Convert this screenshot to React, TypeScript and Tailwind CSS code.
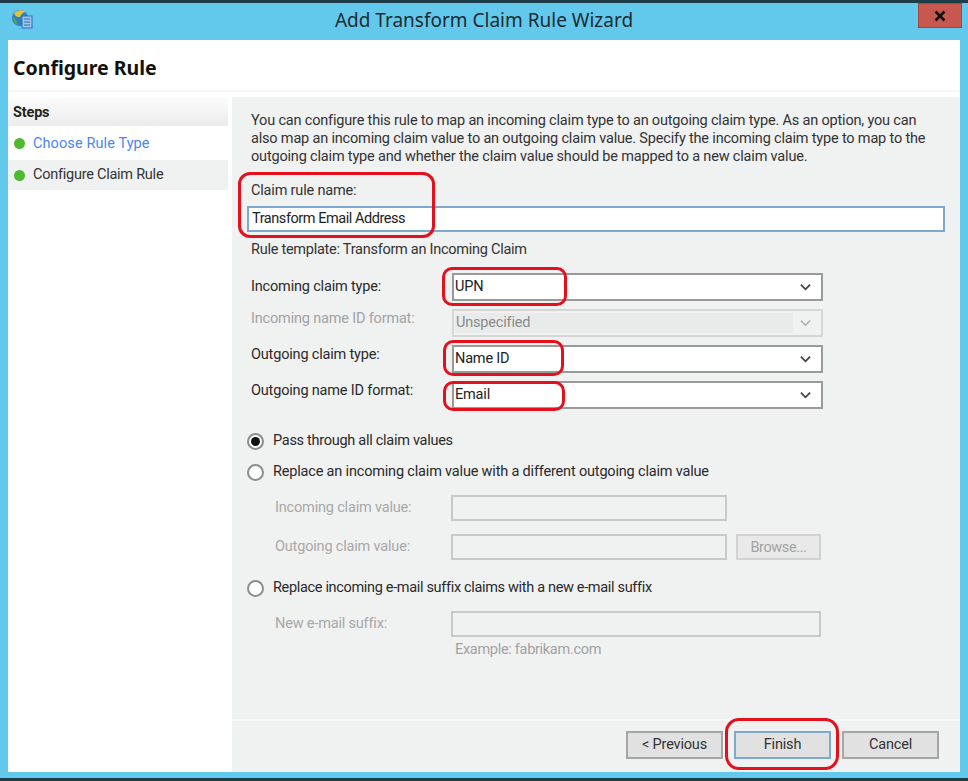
import type { ReactNode } from 'react'

const font = { fontFamily: 'Roboto, sans-serif' }
const titleFont = { fontFamily: '"Noto Sans", sans-serif' }

function Chevron({ disabled }: { disabled?: boolean }) {
  return (
    <svg viewBox="0 0 12 8" className="w-[11px] h-[8px]" aria-hidden="true">
      <path d="M1 1.5 6 6.5 11 1.5" fill="none" stroke={disabled ? '#b5b5b5' : '#444'} strokeWidth="2" />
    </svg>
  )
}

function Combo({ value, disabled }: { value: string; disabled?: boolean }) {
  return (
    <div className={`w-[371px] h-[28px] border-2 flex items-center pl-[1px] pr-[4px] ${disabled ? 'border-[#d6d6d6] bg-[#f0f1f1]' : 'border-[#9a9a9a] bg-white'}`}>
      <div className={`flex-1 h-[20px] flex items-center ${disabled ? 'bg-[#e9eaea] text-[#8a8a8a] pl-[1px]' : 'text-[#222]'}`}>{value}</div>
      <div className="w-[24px] flex justify-center"><Chevron disabled={disabled} /></div>
    </div>
  )
}

function FieldRow({ label, disabled, value, className, labelClass }: { label: string; disabled?: boolean; value: string; className?: string; labelClass?: string }) {
  return (
    <div className={`h-[28px] flex items-center ${className ?? ''}`}>
      <div className={`w-[201px] ${labelClass ?? ''} ${disabled ? 'text-[#a3a3a3]' : 'text-[#2a2a2a]'}`}>{label}</div>
      <Combo value={value} disabled={disabled} />
    </div>
  )
}

function Radio({ checked, children, className }: { checked?: boolean; children: ReactNode; className?: string }) {
  return (
    <div className={`flex items-center gap-[9px] ${className ?? ''}`}>
      <div className="w-[17px] h-[17px] rounded-full border-2 border-[#8d8d8d] bg-white flex items-center justify-center">
        {checked && <div className="w-[9px] h-[9px] rounded-full bg-[#111]" />}
      </div>
      <div className="text-[#2a2a2a]">{children}</div>
    </div>
  )
}

function DisabledInput({ label, className, children }: { label: string; className?: string; children?: ReactNode }) {
  return (
    <div className={`flex items-center pl-[28px] ${className ?? ''}`}>
      <div className="w-[176px] text-[#a8a8a8]">{label}</div>
      {children}
    </div>
  )
}

function WizButton({ label, focus }: { label: string; focus?: boolean }) {
  return (
    <div className={`w-[97px] h-[28px] flex items-center justify-center bg-[#e1e1e1] border-2 text-[#333] ${focus ? 'border-[#7ea9cf]' : 'border-[#a5a5a5]'}`}>
      {label}
    </div>
  )
}

function Marker({ className }: { className: string }) {
  return <div className={`absolute border-[3px] border-[#e5101c] ${className}`} />
}

export default function App() {
  return (
    <div style={font} className="relative w-[968px] h-[781px] overflow-hidden bg-[#62c9ec] text-[14.5px] leading-[20px] tracking-[-0.18px] border-t-[3px] border-b-[3px] border-[#1c3c48]">
      <div className="relative h-[37px] flex items-center justify-center pb-[3px]">
        <svg viewBox="0 0 24 24" className="absolute left-[10px] top-[5px] w-[24px] h-[24px]" aria-hidden="true">
          <circle cx="10" cy="10" r="8" fill="#2f7fc4" />
          <path d="M4 5c3-3 8-4 12-1-3 0-5 2-6 5-2 0-5 0-6-4z" fill="#e4c23a" />
          <path d="M3 9c2 1 4 4 5 8-3-1-5-4-5-8z" fill="#5aa83c" />
          <rect x="12" y="8" width="10" height="12" fill="#9fc6ea" stroke="#2d6fb5" />
          <path d="M14 11h6M14 14h6M14 17h6" stroke="#2d6fb5" strokeWidth="1.2" />
        </svg>
        <div style={titleFont} className="text-[19px] tracking-normal text-[#1f2a30]">Add Transform Claim Rule Wizard</div>
        <div className="absolute right-[6px] top-0 w-[44px] h-[25px] bg-[#c7584f] border border-[#a8453e] flex items-center justify-center">
          <svg viewBox="0 0 12 12" className="w-[12px] h-[12px]" aria-hidden="true">
            <path d="M1.5 1.5 10.5 10.5M10.5 1.5 1.5 10.5" stroke="#111" strokeWidth="2.6" />
          </svg>
        </div>
      </div>

      <div className="ml-[8px] mr-[8px] h-[732px] bg-white flex flex-col">
        <div style={titleFont} className="h-[52px] pl-[5px] pt-[18px] text-[19.5px] tracking-normal font-bold text-[#111] border-b-2 border-[#f6f6f6]">Configure Rule</div>
        <div className="flex-1 flex pt-[5px]">
          <div className="w-[220px] pt-[1px]">
            <div className="h-[28px] pl-[5px] pt-[2px] flex items-center font-bold text-[#222] bg-gradient-to-b from-[#fbfbfb] to-[#ececec]">Steps</div>
            <div className="h-[34px] flex items-center pl-[6px] pt-[1px] gap-[8px] text-[#4c86f5] tracking-[0.1px]">
              <div className="w-[11px] h-[11px] rounded-full bg-[#4cbb2e]" />
              Choose Rule Type
            </div>
            <div className="h-[30px] flex items-center pl-[6px] gap-[8px] bg-[#f0f1f1] text-[#333] tracking-[-0.25px]">
              <div className="w-[11px] h-[11px] rounded-full bg-[#4cbb2e]" />
              Configure Claim Rule
            </div>
          </div>

          <div className="ml-[4px] flex-1 bg-[#f0f1f1] flex flex-col">
            <div className="flex-1 pl-[15px] pr-[15px] pt-[15px]">
              <div className="pl-[4px] text-[#333] leading-[18px] whitespace-nowrap">
                You can configure this rule to map an incoming claim type to an outgoing claim type. As an option, you can<br />
                also map an incoming claim value to an outgoing claim value. Specify the incoming claim type to map to the<br />
                outgoing claim type and whether the claim value should be mapped to a new claim value.
              </div>
              <div className="mt-[15px] pl-[4px] text-[#333]">Claim rule name:</div>
              <div className="mt-[5px] h-[26px] border-2 border-[#7ea9cf] bg-white flex items-center pl-[3px] text-[#222] tracking-[-0.45px]">Transform Email Address</div>
              <div className="mt-[8px] pl-[4px] text-[#333] tracking-[-0.26px]">Rule template: Transform an Incoming Claim</div>
              <div className="mt-[13px] pl-[4px]">
                <FieldRow label="Incoming claim type:" value="UPN" />
                <FieldRow label="Incoming name ID format:" value="Unspecified" disabled className="mt-[8px]" labelClass="mb-[8px]" />
                <FieldRow label="Outgoing claim type:" value="Name ID" className="mt-[8px]" labelClass="mb-[8px]" />
                <FieldRow label="Outgoing name ID format:" value="Email" className="mt-[8px]" labelClass="mb-[8px]" />
              </div>
              <div className="mt-[22px]">
                <Radio checked><span className="tracking-[-0.28px]">Pass through all claim values</span></Radio>
                <Radio className="mt-[11px]">Replace an incoming claim value with a different outgoing claim value</Radio>
                <DisabledInput label="Incoming claim value:" className="mt-[13px]">
                  <div className="w-[276px] h-[26px] border-2 border-[#c9c9c9]" />
                </DisabledInput>
                <DisabledInput label="Outgoing claim value:" className="mt-[13px]">
                  <div className="w-[276px] h-[26px] border-2 border-[#c9c9c9]" />
                  <div className="ml-[9px] w-[85px] h-[26px] border-2 border-[#d2d2d2] bg-[#e9e9e9] text-[#a3a3a3] flex items-center justify-center pt-[2px] tracking-[-0.4px]">Browse...</div>
                </DisabledInput>
                <Radio className="mt-[18px]"><span className="tracking-[-0.33px]">Replace incoming e-mail suffix claims with a new e-mail suffix</span></Radio>
                <DisabledInput label="New e-mail suffix:" className="mt-[13px]">
                  <div className="w-[370px] h-[26px] border-2 border-[#c9c9c9]" />
                </DisabledInput>
                <div className="mt-[3px] pl-[208px] text-[#a3a3a3] tracking-[-0.3px]">Example: fabrikam.com</div>
              </div>
            </div>
            <div className="h-[53px] border-t-2 border-[#f8f8f8] flex items-start justify-end gap-[11px] pt-[10px] pr-[21px]">
              <WizButton label="< Previous" />
              <WizButton label="Finish" focus />
              <WizButton label="Cancel" />
            </div>
          </div>
        </div>
      </div>

      <Marker className="left-[238px] top-[169px] w-[197px] h-[66px] rounded-[12px]" />
      <Marker className="left-[442px] top-[264px] w-[125px] h-[39px] rounded-[10px]" />
      <Marker className="left-[443px] top-[337px] w-[121px] h-[36px] rounded-[10px]" />
      <Marker className="left-[443px] top-[378px] w-[122px] h-[30px] rounded-[10px]" />
      <Marker className="left-[725px] top-[715px] w-[114px] h-[52px] rounded-[14px]" />
    </div>
  )
}
